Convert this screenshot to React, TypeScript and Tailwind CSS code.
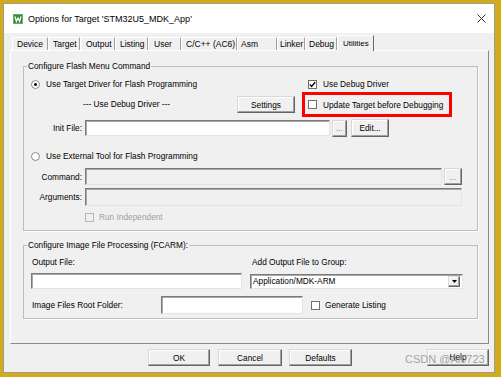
import React from 'react';

const sunken =
  'border border-t-[#7a7a7a] border-l-[#7a7a7a] border-r-[#e3e3e3] border-b-[#e3e3e3] shadow-[inset_1px_1px_0_#a9a9a9]';
const raised =
  'bg-[#f0f0f0] border border-t-[#d8d8d8] border-l-[#d8d8d8] border-r-[#646464] border-b-[#646464] shadow-[inset_-1px_-1px_0_#a0a0a0,inset_1px_1px_0_#ffffff] flex items-center justify-center';

const tabs = [
  { label: 'Device', w: 'w-[36px] pl-[4px]' },
  { label: 'Target', w: 'w-[32px] pl-[4px]' },
  { label: 'Output', w: 'w-[35px] pl-[5px]' },
  { label: 'Listing', w: 'w-[33px] pl-[4px]' },
  { label: 'User', w: 'w-[33px] pl-[5px]' },
  { label: 'C/C++ (AC6)', w: 'w-[56px] pl-[4px]' },
  { label: 'Asm', w: 'w-[40px] pl-[3px]' },
  { label: 'Linker', w: 'w-[28px] pl-[2px]' },
  { label: 'Debug', w: 'w-[32px] pl-[3px]' },
];

const Radio: React.FC<{ checked?: boolean }> = ({ checked }) => (
  <span className="w-[9px] h-[9px] rounded-full bg-white border border-[#8a8a8a] flex items-center justify-center shrink-0">
    {checked && <span className="w-[3px] h-[3px] rounded-full bg-black" />}
  </span>
);

const Check: React.FC<{ checked?: boolean; disabled?: boolean }> = ({ checked, disabled }) => (
  <span
    className={`w-[9px] h-[9px] border shrink-0 flex items-center justify-center ${
      disabled ? 'bg-[#f0f0f0] border-[#b5b5b5]' : 'bg-white border-[#6f6f6f]'
    }`}
  >
    {checked && (
      <svg width="7" height="7" viewBox="0 0 7 7">
        <polyline points="0.8,3.4 2.6,5.4 6.2,1.2" fill="none" stroke="#000" strokeWidth="1.4" />
      </svg>
    )}
  </span>
);

const GroupBox: React.FC<{ title: string; h: string; mt: string; children: React.ReactNode }> = ({
  title,
  h,
  mt,
  children,
}) => (
  <div className={`relative ml-[12px] w-[455px] ${h} ${mt} border border-[#bdbdbd] shadow-[1px_1px_0_#ffffff] flex flex-col`}>
    <span className="absolute top-[-6px] left-[3px] bg-[#f0f0f0] px-[1px] leading-[10px]">{title}</span>
    {children}
  </div>
);

const App: React.FC = () => {
  return (
    <div className="w-[501px] h-[377px] bg-[#d3aa17] pt-[3px] pl-[3px] pr-[6px] pb-[4px] [font-family:'Liberation_Sans',Arial,sans-serif] text-[8.3px] leading-[10px] text-black">
      <div className="w-full h-full border border-[#9a9a9a] bg-[#f0f0f0] flex flex-col">
        {/* title bar */}
        <div className="h-[29px] bg-white flex items-center pl-[9px] pr-[8px] shrink-0">
          <svg width="10" height="10" viewBox="0 0 10 10" className="shrink-0">
            <rect x="0" y="0" width="10" height="10" fill="#2f8a3b" />
            <rect x="0.5" y="0.5" width="9" height="9" fill="none" stroke="#5fb56a" strokeWidth="1" />
            <polyline points="2,2.5 3.4,7.5 5,4 6.6,7.5 8,2.5" fill="none" stroke="#fff" strokeWidth="1.2" />
          </svg>
          <span className="ml-[5px] text-[9px]">Options for Target 'STM32U5_MDK_App'</span>
          <svg width="9" height="9" viewBox="0 0 9 9" className="ml-auto">
            <path d="M0.5 0.5 L8.5 8.5 M8.5 0.5 L0.5 8.5" stroke="#333" strokeWidth="1" />
          </svg>
        </div>

        {/* body */}
        <div className="relative flex-1 flex flex-col pt-[2px]">
          <div className="flex items-end h-[15px] pl-[8px]">
            {tabs.map(t => (
              <div
                key={t.label}
                className={`${t.w} h-[13px] border-t border-l border-t-[#ffffff] border-l-[#ffffff] border-r border-r-[#a0a0a0] flex items-center text-[8.5px] whitespace-nowrap overflow-hidden`}
              >
                {t.label}
              </div>
            ))}
            <div className="w-[37px] h-[16px] mb-[-1px] relative z-10 bg-[#f0f0f0] border-t border-l border-t-[#ffffff] border-l-[#ffffff] border-r border-r-[#696969] pl-[5px] flex items-center text-[8px]">
              Utilities
            </div>
          </div>

          {/* tab panel */}
          <div className="ml-[6px] w-[479px] h-[294px] border border-t-[#ffffff] border-l-[#ffffff] border-r-[#8a8a8a] border-b-[#8a8a8a] flex flex-col">
            <GroupBox title="Configure Flash Menu Command" h="h-[165px]" mt="mt-[15px]">
              {/* row A */}
              <div className="mt-[11px] h-[12px] flex items-center">
                <div className="w-[284px] pl-[7px] flex items-center gap-[6px]">
                  <Radio checked />
                  <span>Use Target Driver for Flash Programming</span>
                </div>
                <Check checked />
                <span className="ml-[6px]">Use Debug Driver</span>
              </div>
              {/* row B */}
              <div className="mt-[2px] h-[25px] flex items-center">
                <div className="w-[213px] pl-[59px] mt-[-2px]">--- Use Debug Driver ---</div>
                <div className={`${raised} w-[58px] h-[17px]`}>Settings</div>
                <div className="ml-[7px] w-[150px] h-[25px] border-[3px] border-[#ff0000] flex items-center pl-[3px]">
                  <Check />
                  <span className="ml-[6px] whitespace-nowrap">Update Target before Debugging</span>
                </div>
              </div>
              {/* row C */}
              <div className="mt-[2px] h-[18px] flex items-center">
                <span className="w-[58px] text-right">Init File:</span>
                <div className={`${sunken} ml-[3px] w-[245px] h-[16px] bg-white`} />
                <div className={`${raised} ml-[2px] w-[15px] h-[17px] text-[#7a7a7a]`}>...</div>
                <div className={`${raised} ml-[4px] w-[38px] h-[18px]`}>Edit...</div>
              </div>
              {/* row D */}
              <div className="mt-[13px] h-[12px] pl-[7px] flex items-center gap-[6px]">
                <Radio />
                <span>Use External Tool for Flash Programming</span>
              </div>
              {/* row E */}
              <div className="mt-[6px] h-[17px] flex items-center">
                <span className="w-[58px] text-right">Command:</span>
                <div className={`${sunken} ml-[3px] w-[357px] h-[17px] bg-[#f0f0f0]`} />
                <div className={`${raised} ml-[2px] w-[18px] h-[17px] text-[#8a8a8a]`}>...</div>
              </div>
              {/* row F */}
              <div className="mt-[3px] h-[18px] flex items-center">
                <span className="w-[58px] text-right">Arguments:</span>
                <div className={`${sunken} ml-[3px] w-[377px] h-[18px] bg-[#f0f0f0]`} />
              </div>
              {/* row G */}
              <div className="mt-[6px] h-[10px] pl-[61px] flex items-center">
                <Check disabled />
                <span className="ml-[5px] text-[#a0a0a0]">Run Independent</span>
              </div>
            </GroupBox>

            <GroupBox title="Configure Image File Processing (FCARM):" h="h-[74px]" mt="mt-[14px]">
              <div className="mt-[11px] h-[10px] pl-[8px] flex items-center">
                <span className="w-[220px]">Output File:</span>
                <span>Add Output File to Group:</span>
              </div>
              <div className="mt-[6px] h-[16px] pl-[7px] flex items-center">
                <div className={`${sunken} w-[211px] h-[16px] bg-white`} />
                <div className={`${sunken} ml-[8px] w-[213px] h-[15px] bg-white flex items-center pl-[2px] pr-[2px]`}>
                  <span className="flex-1">Application/MDK-ARM</span>
                  <div className={`${raised} w-[12px] h-[11px]`}>
                    <svg width="5" height="3" viewBox="0 0 5 3">
                      <polygon points="0,0 5,0 2.5,3" fill="#000" />
                    </svg>
                  </div>
                </div>
              </div>
              <div className="mt-[7px] h-[18px] pl-[8px] flex items-center">
                <span className="w-[129px]">Image Files Root Folder:</span>
                <div className={`${sunken} w-[142px] h-[18px] bg-white`} />
                <span className="ml-[8px]">
                  <Check />
                </span>
                <span className="ml-[5px]">Generate Listing</span>
              </div>
            </GroupBox>
          </div>

          {/* buttons */}
          <div className="relative mt-[5px] h-[17px] flex items-center pl-[144px]">
            <div className={`${raised} w-[62px] h-[17px] border-[#646464]`}>OK</div>
            <div className={`${raised} ml-[8px] w-[64px] h-[17px]`}>Cancel</div>
            <div className={`${raised} ml-[7px] w-[63px] h-[17px]`}>Defaults</div>
            <div className={`${raised} ml-[75px] w-[62px] h-[17px] items-start pt-[2px]`}>Help</div>
            <span className="absolute left-[401px] top-[5px] text-[11px] leading-[11px] text-[#8c8c8c]/80 whitespace-nowrap">
              CSDN @Al0723
            </span>
          </div>
        </div>
      </div>
    </div>
  );
};

export default App;
